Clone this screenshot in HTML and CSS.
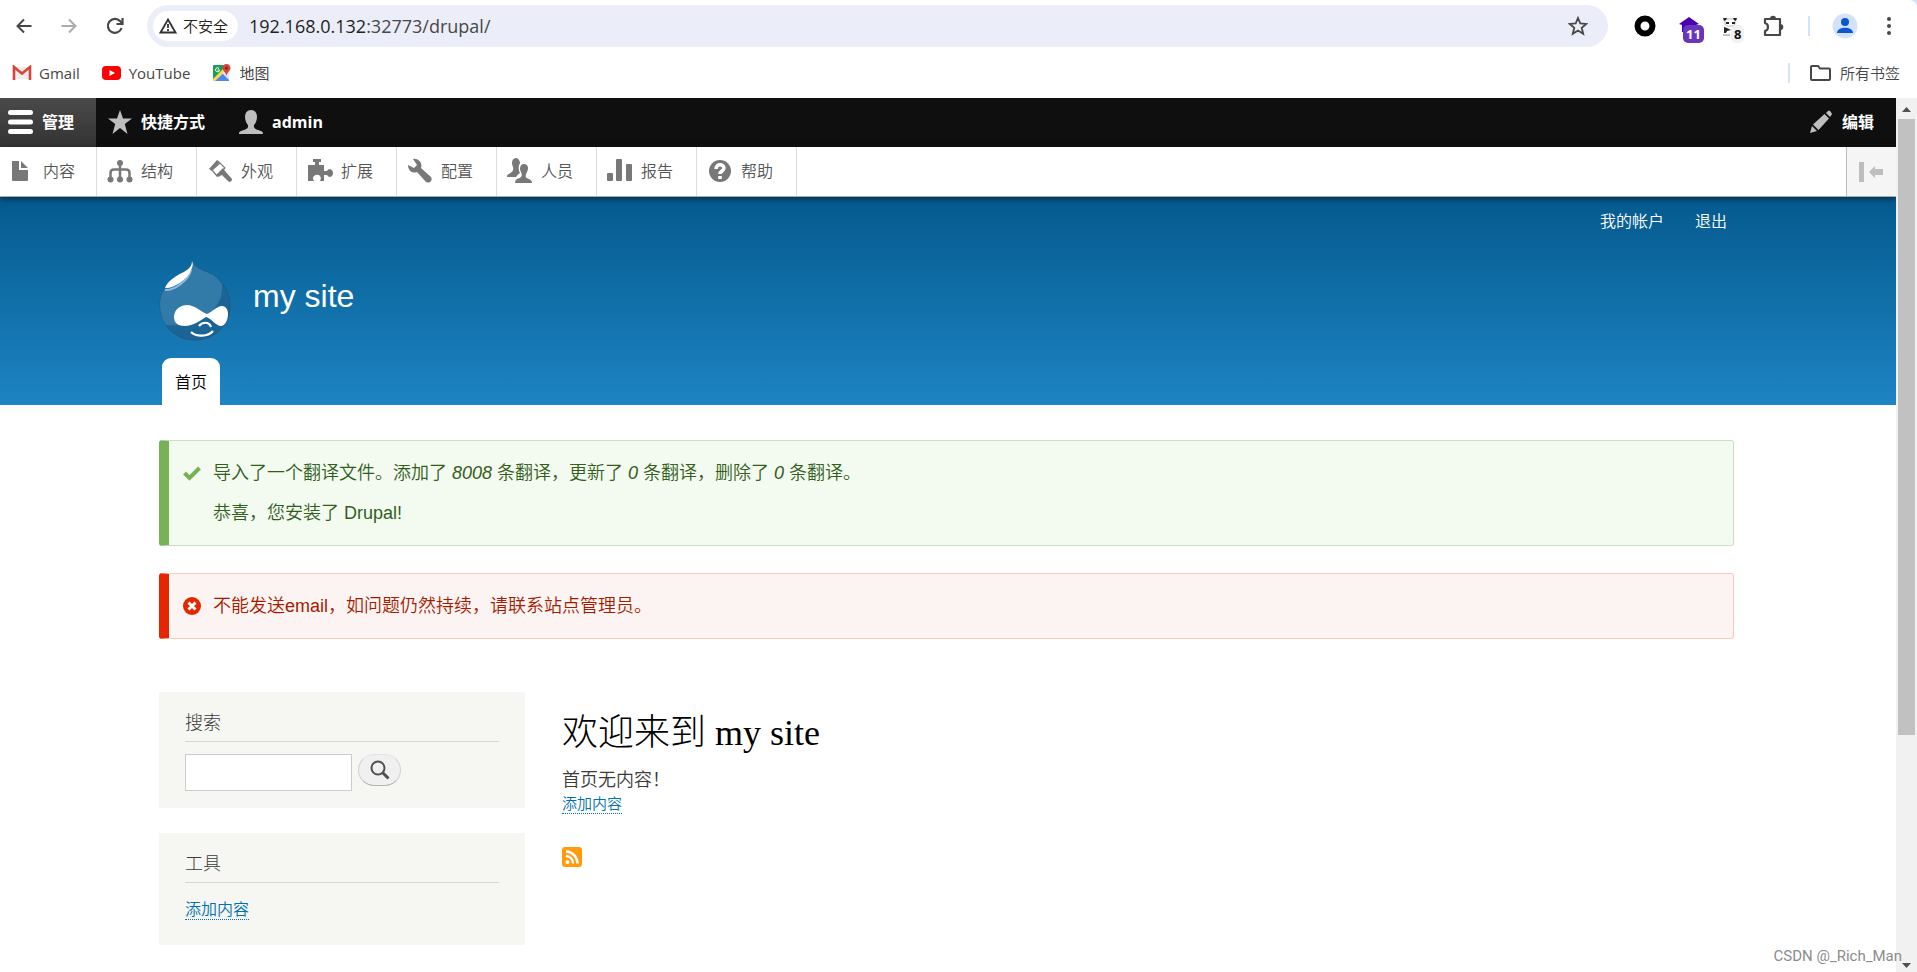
FILE: index.html
```html
<!DOCTYPE html>
<html lang="zh-CN">
<head>
    <meta charset="UTF-8">
    <meta name="viewport" content="width=device-width, initial-scale=1.0">
    <title>欢迎来到 my site | my site</title>
    <link rel="stylesheet" href="styles.css">
</head>
<body>

    <!-- Browser bar -->
    <div class="browser">
        <div class="nav-row">
            <button class="nav-btn" aria-label="后退"><svg width="16" height="16" viewBox="0 0 16 16" fill="none" stroke="#474747" stroke-width="2"><path d="M15.500 8H2M8 1.500L1.500 8L8 14.500"/></svg></button>
            <button class="nav-btn" aria-label="前进"><svg width="16" height="16" viewBox="0 0 16 16" fill="none" stroke="#ababab" stroke-width="2"><path d="M.5 8H14M8 1.500L14.500 8L8 14.500"/></svg></button>
            <button class="nav-btn" aria-label="刷新"><svg width="18" height="18" viewBox="0 0 18 18" fill="none" stroke="#474747" stroke-width="2.200"><path d="M15.600 11A7 7 0 1 1 14 4L16 6"/><path d="M16.500 1V7H10.500"/></svg></button>
            <div class="address">
                <button class="chip"><svg width="18" height="16" viewBox="0 0 18 16" fill="none" stroke="#333" stroke-width="1.800"><path d="M9 1.500L16.500 14.500H1.500Z"/><path d="M9 6V10M9 11V13"/></svg>不安全</button>
                <span class="url">192.168.0.132<span class="url-path">:32773/drupal/</span></span>
                <button class="bookmark" aria-label="为此标签页添加书签"><svg width="20" height="20" viewBox="0 0 20 20" fill="none" stroke="#474747" stroke-width="1.800"><path d="M10 2L12.300 7.400L18.300 7.900L13.700 11.800L15.200 17.700L10 14.500L4.800 17.700L6.300 11.800L1.700 7.900L7.700 7.400Z"/></svg></button>
            </div>
            <div class="extensions">
                <svg width="22" height="22" viewBox="0 0 22 22"><circle cx="11" cy="11" r="7.500" fill="none" stroke="#000" stroke-width="6"/></svg>
                <span class="ext"><svg width="22" height="20" viewBox="0 0 22 20"><path d="M11 1L21 8L18 9V16H4V9L1 8Z" fill="#4a00b0"/></svg><b class="badge purple">11</b></span>
                <span class="ext"><svg width="18" height="20" viewBox="0 0 18 20"><path d="M3 3V8C4 11 12 11 13 8V3Z" fill="#fff" stroke="#bbb"/><path d="M1 2H5L4 4L2 5ZM11 2H15L14 5L12 4ZM4 6H7V8H4ZM10 6H13V8H10ZM2 11L5 12L9 14L5 15L4 17H2Z" fill="#222"/><path d="M1 19H8" stroke="#888"/></svg><b class="badge light">8</b></span>
                <svg width="24" height="24" viewBox="0 0 24 24" fill="none" stroke="#474747" stroke-width="2.200" stroke-linejoin="round"><path d="M3 5H18V21H3V17C7 16 7 10 3 9Z"/><path d="M9 5C9 2 13 2 13 5M18 11C21 11 21 15 18 15" fill="#474747"/></svg>
                <i class="divider"></i>
                <svg width="26" height="26" viewBox="0 0 26 26"><circle cx="13" cy="13" r="12.500" fill="#d3e3fd"/><circle cx="13" cy="9" r="4" fill="#0b57d0"/><path d="M5 20C5 13 21 13 21 20Z" fill="#0b57d0"/></svg>
                <svg width="18" height="20" viewBox="0 0 18 20" fill="#474747"><circle cx="9" cy="3" r="2"/><circle cx="9" cy="10" r="2"/><circle cx="9" cy="17" r="2"/></svg>
            </div>
        </div>
        <div class="bookmarks">
            <a href="#"><svg width="20" height="16" viewBox="0 0 20 16"><path d="M2 2H18V14H2Z" fill="#eee"/><path d="M2 15V2L10 8.500L18 2V15" fill="none" stroke="#db4437" stroke-width="2.600"/></svg>Gmail</a>
            <a href="#"><svg width="20" height="16" viewBox="0 0 20 16"><rect x="0" y="1" width="19" height="14" rx="4" fill="#f00"/><path d="M7.500 5L13 8L7.500 11Z" fill="#fff"/></svg>YouTube</a>
            <a href="#"><svg width="20" height="20" viewBox="0 0 20 20"><rect x="1" y="2" width="16" height="16" rx="1" fill="#1e9d58"/><path d="M2 17L11 9L17 15V17Q17 18 16 18H2Z" fill="#4a89f3"/><path d="M1 16L13 4L15 7L3 18H1Z" fill="#fdd84d"/><path d="M10 10L17 17V8L13 8Z" fill="#e8e8e8"/><path d="M14.500 1C12 1 10.500 3 10.500 5C10.500 8 14 9 14.500 13C15 9 18.500 8 18.500 5C18.500 3 17 1 14.500 1Z" fill="#db4437"/><circle cx="14.500" cy="5" r="1.500" fill="#7b231e"/><path d="M7 5.500A2 2 0 1 0 7.500 7H5.500" fill="none" stroke="#fff"/></svg>地图</a>
            <div class="all-bookmarks">
                <i class="divider"></i>
                <a href="#"><svg width="21" height="18" viewBox="0 0 21 18" fill="none" stroke="#474747" stroke-width="2"><path d="M1 3Q1 2 2 2H8L10 4.500H19Q20 4.500 20 5.500V15Q20 16 19 16H2Q1 16 1 15Z"/></svg>所有书签</a>
            </div>
        </div>
    </div>

    <div class="viewport">
        <div class="page">

            <!-- Admin toolbar -->
            <nav class="toolbar-bar">
                <a href="#" class="tab active"><svg width="25" height="24" viewBox="0 0 25 24" stroke="#fff" stroke-width="5" stroke-linecap="round"><path d="M2.500 2.500H22.500M2.500 12H22.500M2.500 21.500H22.500"/></svg>管理</a>
                <a href="#" class="tab"><svg width="24" height="24" viewBox="0 0 24 24" fill="#bebebe"><path d="M12 0L15 8.500H24L16.800 14L19.500 24L12 18L4.500 24L7.200 14L0 8.500H9Z"/></svg>快捷方式</a>
                <a href="#" class="tab"><svg width="24" height="24" viewBox="0 0 24 24" fill="#bebebe"><path d="M12 0C8 0 6 3 6 7C6 11 8 14 9 15C9.500 18 8 19 5 20C2 21 0 21 0 24H24C24 21 22 21 19 20C16 19 14.500 18 15 15C16 14 18 11 18 7C18 3 16 0 12 0Z"/></svg>admin</a>
                <button class="tab edit"><svg width="24" height="24" viewBox="0 0 24 24" fill="#bebebe"><path d="M1 23L3 16L8 21ZM4 14.500L15.500 4L20 8.500L9.500 20ZM17 3L19 1Q20 0 21.500 1.500L22.500 3Q23.500 4 22.500 5L21 7Z"/></svg>编辑</button>
            </nav>
            <div class="tray">
                <ul class="tray-menu">
                    <li><a href="#"><svg width="26" height="26" viewBox="0 0 26 26"><path d="M2 3H9V12H18V22Q18 23 17 23H3Q2 23 2 22ZM11 3L18 10H11Z"/></svg>内容</a></li>
                    <li><a href="#"><svg width="26" height="26" viewBox="0 0 26 26"><circle cx="13" cy="5" r="3"/><circle cx="3.500" cy="21.500" r="3"/><circle cx="13" cy="21.500" r="3"/><circle cx="22.500" cy="21.500" r="3"/><path d="M13 5V21M3.500 20V15Q3.500 11.500 7 11.500H19Q22.500 11.500 22.500 15V20" fill="none" stroke="#787878" stroke-width="2.500"/></svg>结构</a></li>
                    <li><a href="#"><svg width="26" height="26" viewBox="0 0 26 26"><path d="M2 11L10 2L13 4L5 13Z"/><path d="M5 12L13 5L18 10L10 18Z" fill="#fff" stroke="#787878" stroke-width="1.200"/><path d="M16 10L18 13L25 21Q25 24 22 24L15 17L11 19L9 17Z"/></svg>外观</a></li>
                    <li><a href="#"><svg width="26" height="26" viewBox="0 0 26 26"><path d="M1 7H8V4H6V1H14V4H12V7H17V13H20Q21 11 23 11Q26 12 26 15Q26 18 23 19Q21 19 20 17H17V23H13Q15 19 12 17Q9 16 7 18Q5 20 7 23H1Z"/></svg>扩展</a></li>
                    <li><a href="#"><svg width="26" height="26" viewBox="0 0 26 26"><path d="M6 1C11 0 16 5 14 10L24 19C26 22 23 26 19 24L10 14C6 16 1 13 1 7L7 10L10 7Z"/></svg>配置</a></li>
                    <li><a href="#"><svg width="26" height="26" viewBox="0 0 26 26"><path d="M9 0C5 0 4 5 6 9C7 13 5 14 2 16Q0 16 0 19H9Q11 16 13 15Q11 12 12 7Q14 5 12 2Q11 0 9 0Z"/><path d="M17 6C13 6 12 11 14 14C16 18 14 20 10 21Q8 22 8 25H25Q25 22 22 21C18 20 18 18 20 14C22 10 21 6 17 6Z"/></svg>人员</a></li>
                    <li><a href="#"><svg width="26" height="26" viewBox="0 0 26 26"><rect x="0" y="15" width="6" height="8" rx="1"/><rect x="9" y="1" width="6" height="22" rx="1"/><rect x="19" y="6" width="6" height="17" rx="1"/></svg>报告</a></li>
                    <li><a href="#"><svg width="26" height="26" viewBox="0 0 26 26"><circle cx="13" cy="13" r="11"/><path d="M9 11C9 5 17 6 17 10C17 13 13 13 13 16M13 18V21" fill="none" stroke="#fff" stroke-width="3.500"/></svg>帮助</a></li>
                </ul>
                <button class="tray-toggle" aria-label="垂直方向"><svg width="26" height="20" viewBox="0 0 26 20" fill="#bebebe"><path d="M0 0H5V20H0ZM10 10L16 4V7H24V13H16V16Z"/></svg></button>
            </div>

            <!-- Site header -->
            <header class="site-header">
                <nav class="account-menu">
                    <a href="#">我的帐户</a>
                    <a href="#">退出</a>
                </nav>
                <div class="branding">
                    <svg width="72" height="81" viewBox="0 0 72 81">
                        <path d="M33 1C33 6 30 9 25 12C12 19 1 29 1 45C1 65 16 80 36 80C56 80 71 65 71 46C71 30 62 20 52 14C44 10 36 9 33 1Z" fill="#1a6496" stroke="#25597c"/>
                        <path d="M33 1C33 6 30 9 25 12C12 19 1 29 1 45Q1 57 7 65C36 68 66 51 63 24Q58 17 52 14C44 10 36 9 33 1Z" fill="#327aa8"/>
                        <path d="M6 30C15 31 30 20 32 10" fill="none" stroke="#8db8d4" stroke-width="2"/>
                        <path d="M33 1C33 6 30 9 25 12C16 16 8 22 6 28C13 29 28 20 31 12Q35 6 33 1Z" fill="#fff"/>
                        <path d="M15 57C15 49 22 45 28 45C36 45 42 52 48 54C53 52 58 46 63 46C67 46 69 50 69 54C69 60 66 66 62 66C57 66 52 58 47 57C42 60 34 66 26 66C19 66 15 63 15 57Z" fill="#fff"/>
                        <path d="M40 66C43 62 50 61 52 67M32 72C37 77 49 77 54 71" fill="none" stroke="#fff" stroke-width="2.200"/>
                    </svg>
                    <a href="#" class="site-name">my site</a>
                </div>
                <nav class="main-menu"><a href="#">首页</a></nav>
            </header>

            <!-- Status messages -->
            <div class="messages status">
                <svg width="18" height="18" viewBox="0 0 18 18"><path d="M1.500 9L6.500 14L16.500 4" fill="none" stroke="#73b355" stroke-width="4"/></svg>
                <ul>
                    <li>导入了一个翻译文件。添加了 <em>8008</em> 条翻译，更新了 <em>0</em> 条翻译，删除了 <em>0</em> 条翻译。</li>
                    <li>恭喜，您安装了 Drupal!</li>
                </ul>
            </div>
            <div class="messages error">
                <svg width="18" height="18" viewBox="0 0 18 18"><circle cx="9" cy="9" r="9" fill="#e32700"/><path d="M5.500 5.500L12.500 12.500M12.500 5.500L5.500 12.500" stroke="#fff" stroke-width="3"/></svg>
                <p>不能发送email，如问题仍然持续，请联系站点管理员。</p>
            </div>

            <div class="main">
                <aside class="sidebar">
                    <section class="block">
                        <h2><label for="keys">搜索</label></h2>
                        <form class="search">
                            <input type="search" id="keys">
                            <button type="button" aria-label="搜索"><svg width="20" height="20" viewBox="0 0 20 20" fill="none" stroke="#505050"><circle cx="8" cy="8" r="6.500" stroke-width="2"/><path d="M12.500 12.500L18.500 18.500" stroke-width="3"/></svg></button>
                        </form>
                    </section>
                    <section class="block tools">
                        <h2>工具</h2>
                        <a href="#" class="link">添加内容</a>
                    </section>
                </aside>
                <main class="content">
                    <h1>欢迎来到 my site</h1>
                    <p>首页无内容！</p>
                    <a href="#" class="link small">添加内容</a>
                    <a href="#" class="feed" aria-label="RSS"><svg width="20" height="20" viewBox="0 0 20 20"><rect width="20" height="20" rx="3" fill="#ff9b0c"/><circle cx="5.500" cy="15" r="2" fill="#fff"/><path d="M4 9A7 7 0 0 1 11 16.500M4 4.500A12 12 0 0 1 15.500 16.500" fill="none" stroke="#fff" stroke-width="2.400"/></svg></a>
                </main>
            </div>
        </div>

        <!-- Page scrollbar -->
        <div class="scrollbar">
            <svg width="21" height="21" viewBox="0 0 21 21" fill="#505050"><path d="M6 14L10.500 9L15 14Z"/></svg>
            <div class="track"><div class="thumb"></div></div>
            <svg width="21" height="21" viewBox="0 0 21 21" fill="#505050"><path d="M6 12L10.500 17L15 12Z"/></svg>
        </div>
    </div>

    <div class="watermark">CSDN @_Rich_Man</div>

</body>
</html>
```
FILE: styles.css
```css
/* Global Styles */
* {
    margin: 0;
    padding: 0;
    box-sizing: border-box;
}

body {
    display: flex;
    flex-direction: column;
    height: 100vh;
    overflow: hidden;
    font-family: "Open Sans", "Noto Sans CJK SC", sans-serif;
    font-size: 16px;
    line-height: 24px;
    color: #3b3b3b;
    background: #d3e3fd;
}

a {
    color: inherit;
    text-decoration: none;
}

button {
    border: none;
    background: none;
    font: inherit;
    color: inherit;
}

ul {
    list-style: none;
}

svg {
    display: block;
    flex: none;
}

/* Browser bar */
.browser {
    flex: none;
    padding-top: 5px;
    background: #fff;
    border-top-right-radius: 8px;
}

.nav-row {
    display: flex;
    align-items: center;
    padding: 0 16px;
}

.nav-btn {
    display: flex;
    width: 45px;
}

.address {
    flex: 1;
    display: flex;
    align-items: center;
    height: 42px;
    margin-left: -4px;
    padding: 0 20px 0 6px;
    border-radius: 21px;
    background: #ebeef8;
}

.chip {
    display: flex;
    align-items: center;
    gap: 6px;
    height: 30px;
    padding: 0 10px 0 6px;
    border-radius: 15px;
    background: #fff;
    font-size: 15px;
    font-weight: 350;
    color: #222;
}

.url {
    flex: 1;
    padding-left: 11px;
    font-size: 18px;
    color: #1f1f1f;
}

.url-path {
    color: #474747;
}

.extensions {
    display: flex;
    align-items: center;
    gap: 22px;
    padding: 0 3px 0 26px;
}

.ext {
    position: relative;
}

.badge {
    position: absolute;
    left: 5px;
    top: 9px;
    padding: 0 3px;
    border-radius: 5px;
    font-size: 13px;
    line-height: 18px;
}

.purple {
    background: #6a35bd;
    color: #fff;
}

.light {
    left: 9px;
    background: #f1f1f1;
    color: #111;
}

.divider {
    width: 2px;
    height: 20px;
    background: #d3e3fd;
}

.bookmarks {
    display: flex;
    align-items: center;
    gap: 22px;
    height: 51px;
    padding: 0 17px 0 12px;
    font-size: 15px;
    color: #474747;
}

.bookmarks a {
    display: flex;
    align-items: center;
    gap: 7px;
}

.all-bookmarks {
    display: flex;
    align-items: center;
    gap: 20px;
    margin-left: auto;
    font-weight: 350;
}

.all-bookmarks a {
    gap: 9px;
}

/* Page and scrollbar */
.viewport {
    flex: 1;
    display: flex;
    min-height: 0;
}

.page {
    flex: 1;
    overflow: hidden;
    background: #fff;
    font-weight: 350;
}

.scrollbar {
    display: flex;
    flex-direction: column;
    width: 21px;
    background: #f1f1f1;
}

.track {
    flex: 1;
    padding: 0 2px;
}

.thumb {
    height: 74%;
    background: #c1c1c1;
}

/* Admin toolbar */
.toolbar-bar {
    display: flex;
    height: 49px;
    background: #0f0f0f;
    color: #fff;
    font-weight: 700;
}

.tab {
    display: flex;
    align-items: center;
    gap: 9px;
    padding: 0 22px 2px 12px;
}

.tab.active {
    padding: 0 22px 2px 8px;
    background: linear-gradient(#4a4a4a, #333);
}

.tab.edit {
    margin-left: auto;
}

.tray {
    position: relative;
    display: flex;
    justify-content: space-between;
    height: 50px;
    background: #fff;
    border-bottom: 1px solid #aaa;
    box-shadow: 0 2px 6px rgba(0, 0, 0, 0.5);
    color: #565656;
}

.tray-menu {
    display: flex;
    fill: #787878;
}

.tray-menu li {
    border-right: 1px solid #ddd;
}

.tray-menu a {
    display: flex;
    align-items: center;
    gap: 8px;
    height: 100%;
    padding: 0 23px 2px 10px;
}

.tray-menu li:first-child a {
    padding: 0 21px 2px 10px;
    gap: 7px;
}

.tray-toggle {
    width: 50px;
    padding-left: 12px;
    border-left: 1px solid #bbb;
    background: #f5f5f5;
}

/* Site header */
.site-header {
    padding: 0 162px 0 159px;
    background: linear-gradient(#055a8e, #1d84c3);
    color: #fff;
}

.account-menu {
    display: flex;
    justify-content: flex-end;
    gap: 31px;
    padding: 12px 7px 0 0;
}

.branding {
    display: flex;
    gap: 22px;
    padding-top: 27px;
}

.site-name {
    padding-top: 16px;
    font-family: "Liberation Sans", Arial, sans-serif;
    font-size: 32px;
    line-height: 40px;
}

.main-menu {
    display: flex;
    padding: 17px 3px 0;
}

.main-menu a {
    padding: 12px 13px 11px;
    border-radius: 9px 9px 0 0;
    background: #fff;
    color: #000;
}

/* Status messages */
.messages {
    display: flex;
    gap: 12px;
    margin: 35px 162px 0 159px;
    padding: 20px 12px 20px 14px;
    border: 1px solid;
    border-left-width: 10px;
    border-radius: 3px;
    font-family: "Liberation Sans", "Noto Sans CJK SC", sans-serif;
    font-size: 18px;
}

.messages svg {
    margin-top: 3px;
}

.status {
    border-color: #c9e1bd #c9e1bd #c9e1bd #77b259;
    background: #f3faef;
    color: #325e1c;
}

.status li + li {
    margin-top: 16px;
}

.error {
    margin-top: 27px;
    border-color: #f9c9bf #f9c9bf #f9c9bf #e62600;
    background: #fcf4f2;
    color: #a51b00;
}

/* Main columns */
.main {
    display: flex;
    gap: 37px;
    padding: 53px 162px 0 159px;
}

.sidebar {
    width: 366px;
}

.block {
    margin-bottom: 25px;
    padding: 18px 26px 17px;
    background: #f6f6f2;
}

.tools {
    padding-bottom: 24px;
}

.block h2 {
    margin-bottom: 12px;
    padding-bottom: 6px;
    border-bottom: 1px solid #d6d6d6;
    font-size: 18px;
    font-weight: 300;
    line-height: 25px;
}

.search {
    display: flex;
    align-items: flex-start;
    gap: 6px;
}

.search input {
    width: 167px;
    height: 37px;
    padding: 4px;
    border: 1px solid #ccc;
    background: #fff;
}

.search button {
    display: flex;
    justify-content: center;
    width: 43px;
    padding: 5px 0;
    border: 1px solid;
    border-color: #e4e4e4 #d2d2d2 #b4b4b4 #d2d2d2;
    border-radius: 16px;
    background: #f0f0f0;
}

.link {
    display: inline-block;
    border-bottom: 1px dotted #0071b3;
    line-height: 20px;
    color: #0071b3;
}

.tools .link {
    margin-top: 4px;
}

.content {
    flex: 1;
    padding-top: 20px;
}

.content h1 {
    font-family: "Liberation Serif", "Noto Sans CJK SC", serif;
    font-size: 36px;
    font-weight: 300;
    line-height: 42px;
    color: #000;
}

.content p {
    margin-top: 13px;
    font-size: 18px;
}

.link.small {
    font-size: 15px;
}

.feed {
    display: block;
    margin-top: 32px;
}

.watermark {
    position: absolute;
    right: 15px;
    bottom: 4px;
    font-family: Roboto, "Liberation Sans", sans-serif;
    font-size: 15px;
    color: #8c8c8c;
}
```
